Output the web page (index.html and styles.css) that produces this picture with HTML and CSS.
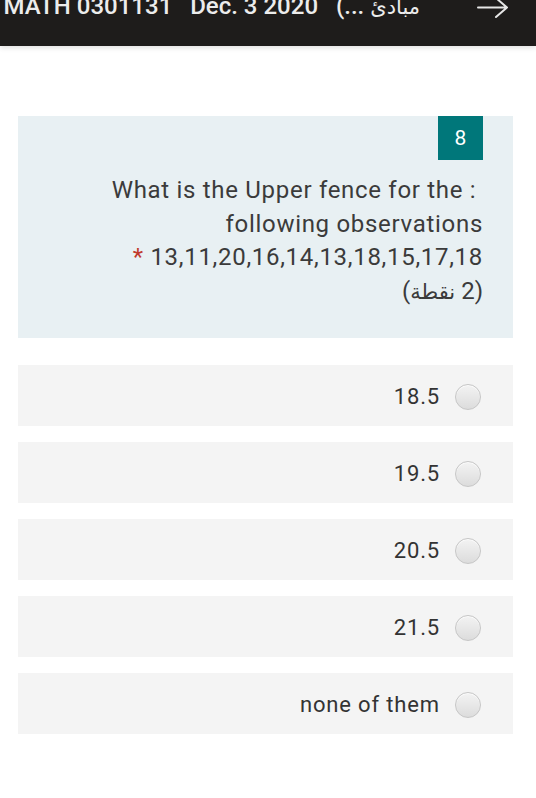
FILE: index.html
```html
<!DOCTYPE html>
<html lang="ar">
<head>
<meta charset="utf-8">
<title>MATH 0301131</title>
<link rel="stylesheet" href="styles.css">
</head>
<body>
<header class="topbar">
  <div class="title" dir="ltr">MATH 0301131&nbsp;&nbsp; Dec. 3 2020&nbsp;&nbsp; (... <bdi>مبادئ</bdi></div>
  <svg class="arrow" width="32" height="20" viewBox="0 0 32 20" aria-hidden="true">
    <path d="M1 8.5 H30 M19 -1 L30 8.5 L19 18" fill="none" stroke="#e6e6e6" stroke-width="2" stroke-linecap="round" stroke-linejoin="round"/>
  </svg>
</header>
<main class="content">
  <section class="question">
    <div class="badge-row"><span class="badge">8</span></div>
    <div class="qtext" dir="ltr">
      <div class="line">What is the Upper fence for the :&nbsp;</div>
      <div class="line">following observations</div>
      <div class="line"><span class="req">*</span> 13,11,20,16,14,13,18,15,17,18</div>
      <div class="line">(<bdi>نقطة</bdi> 2)</div>
    </div>
  </section>
  <ul class="options">
    <li class="option"><span class="label">18.5</span><span class="radio"></span></li>
    <li class="option"><span class="label">19.5</span><span class="radio"></span></li>
    <li class="option"><span class="label">20.5</span><span class="radio"></span></li>
    <li class="option"><span class="label">21.5</span><span class="radio"></span></li>
    <li class="option"><span class="label">none of them</span><span class="radio"></span></li>
  </ul>
</main>
</body>
</html>
```
FILE: styles.css
```css
* { box-sizing: border-box; }
html, body {
  margin: 0;
  padding: 0;
  background: #ffffff;
  font-family: Roboto, "Noto Sans", "DejaVu Sans", sans-serif;
}
.topbar {
  height: 46px;
  background: #1e1c1b;
  display: flex;
  justify-content: flex-end;
  align-items: flex-start;
  overflow: hidden;
  box-shadow: 0 2px 5px rgba(0,0,0,0.12);
  padding-right: 27px;
}
.title {
  color: #ececec;
  font-size: 24px;
  font-weight: 500;
  line-height: 28px;
  margin-top: -8px;
  white-space: nowrap;
  margin-right: 57px;
}
.title bdi { font-family: "Noto Sans", "DejaVu Sans", sans-serif; font-size: 21px; }
.arrow { display: block; margin-top: -1px; }
.content {
  padding: 70px 23px 40px 18px;
}
.question {
  background: #e8f0f3;
  padding: 0 30px 30px 30px;
}
.badge-row {
  display: flex;
  justify-content: flex-end;
}
.badge {
  width: 45px;
  height: 44px;
  background: #00777a;
  color: #ffffff;
  font-size: 21px;
  display: flex;
  align-items: center;
  justify-content: center;
}
.qtext {
  margin-top: 14px;
  text-align: right;
  color: #3b3b3b;
  font-size: 24px;
  line-height: 33.5px;
  letter-spacing: 0.7px;
}
.req { color: #c0392b; }
.qtext bdi { font-family: "Noto Sans", "DejaVu Sans", sans-serif; font-size: 21px; letter-spacing: 0; }
.options {
  list-style: none;
  margin: 27px 0 0 0;
  padding: 0;
  display: flex;
  flex-direction: column;
  gap: 16px;
}
.option {
  height: 61px;
  background: #f4f4f4;
  display: flex;
  justify-content: flex-end;
  align-items: center;
  gap: 15px;
  padding-right: 32px;
}
.label {
  color: #333333;
  font-size: 22px;
  letter-spacing: 0.85px;
  margin-top: 2px;
}
.radio {
  width: 26px;
  height: 26px;
  border-radius: 50%;
  border: 1px solid #c6c6c6;
  background: linear-gradient(#f3f3f3, #dcdcdc);
  box-shadow: inset 0 1px 1px rgba(255,255,255,0.8);
  margin-top: 3px;
}
```
